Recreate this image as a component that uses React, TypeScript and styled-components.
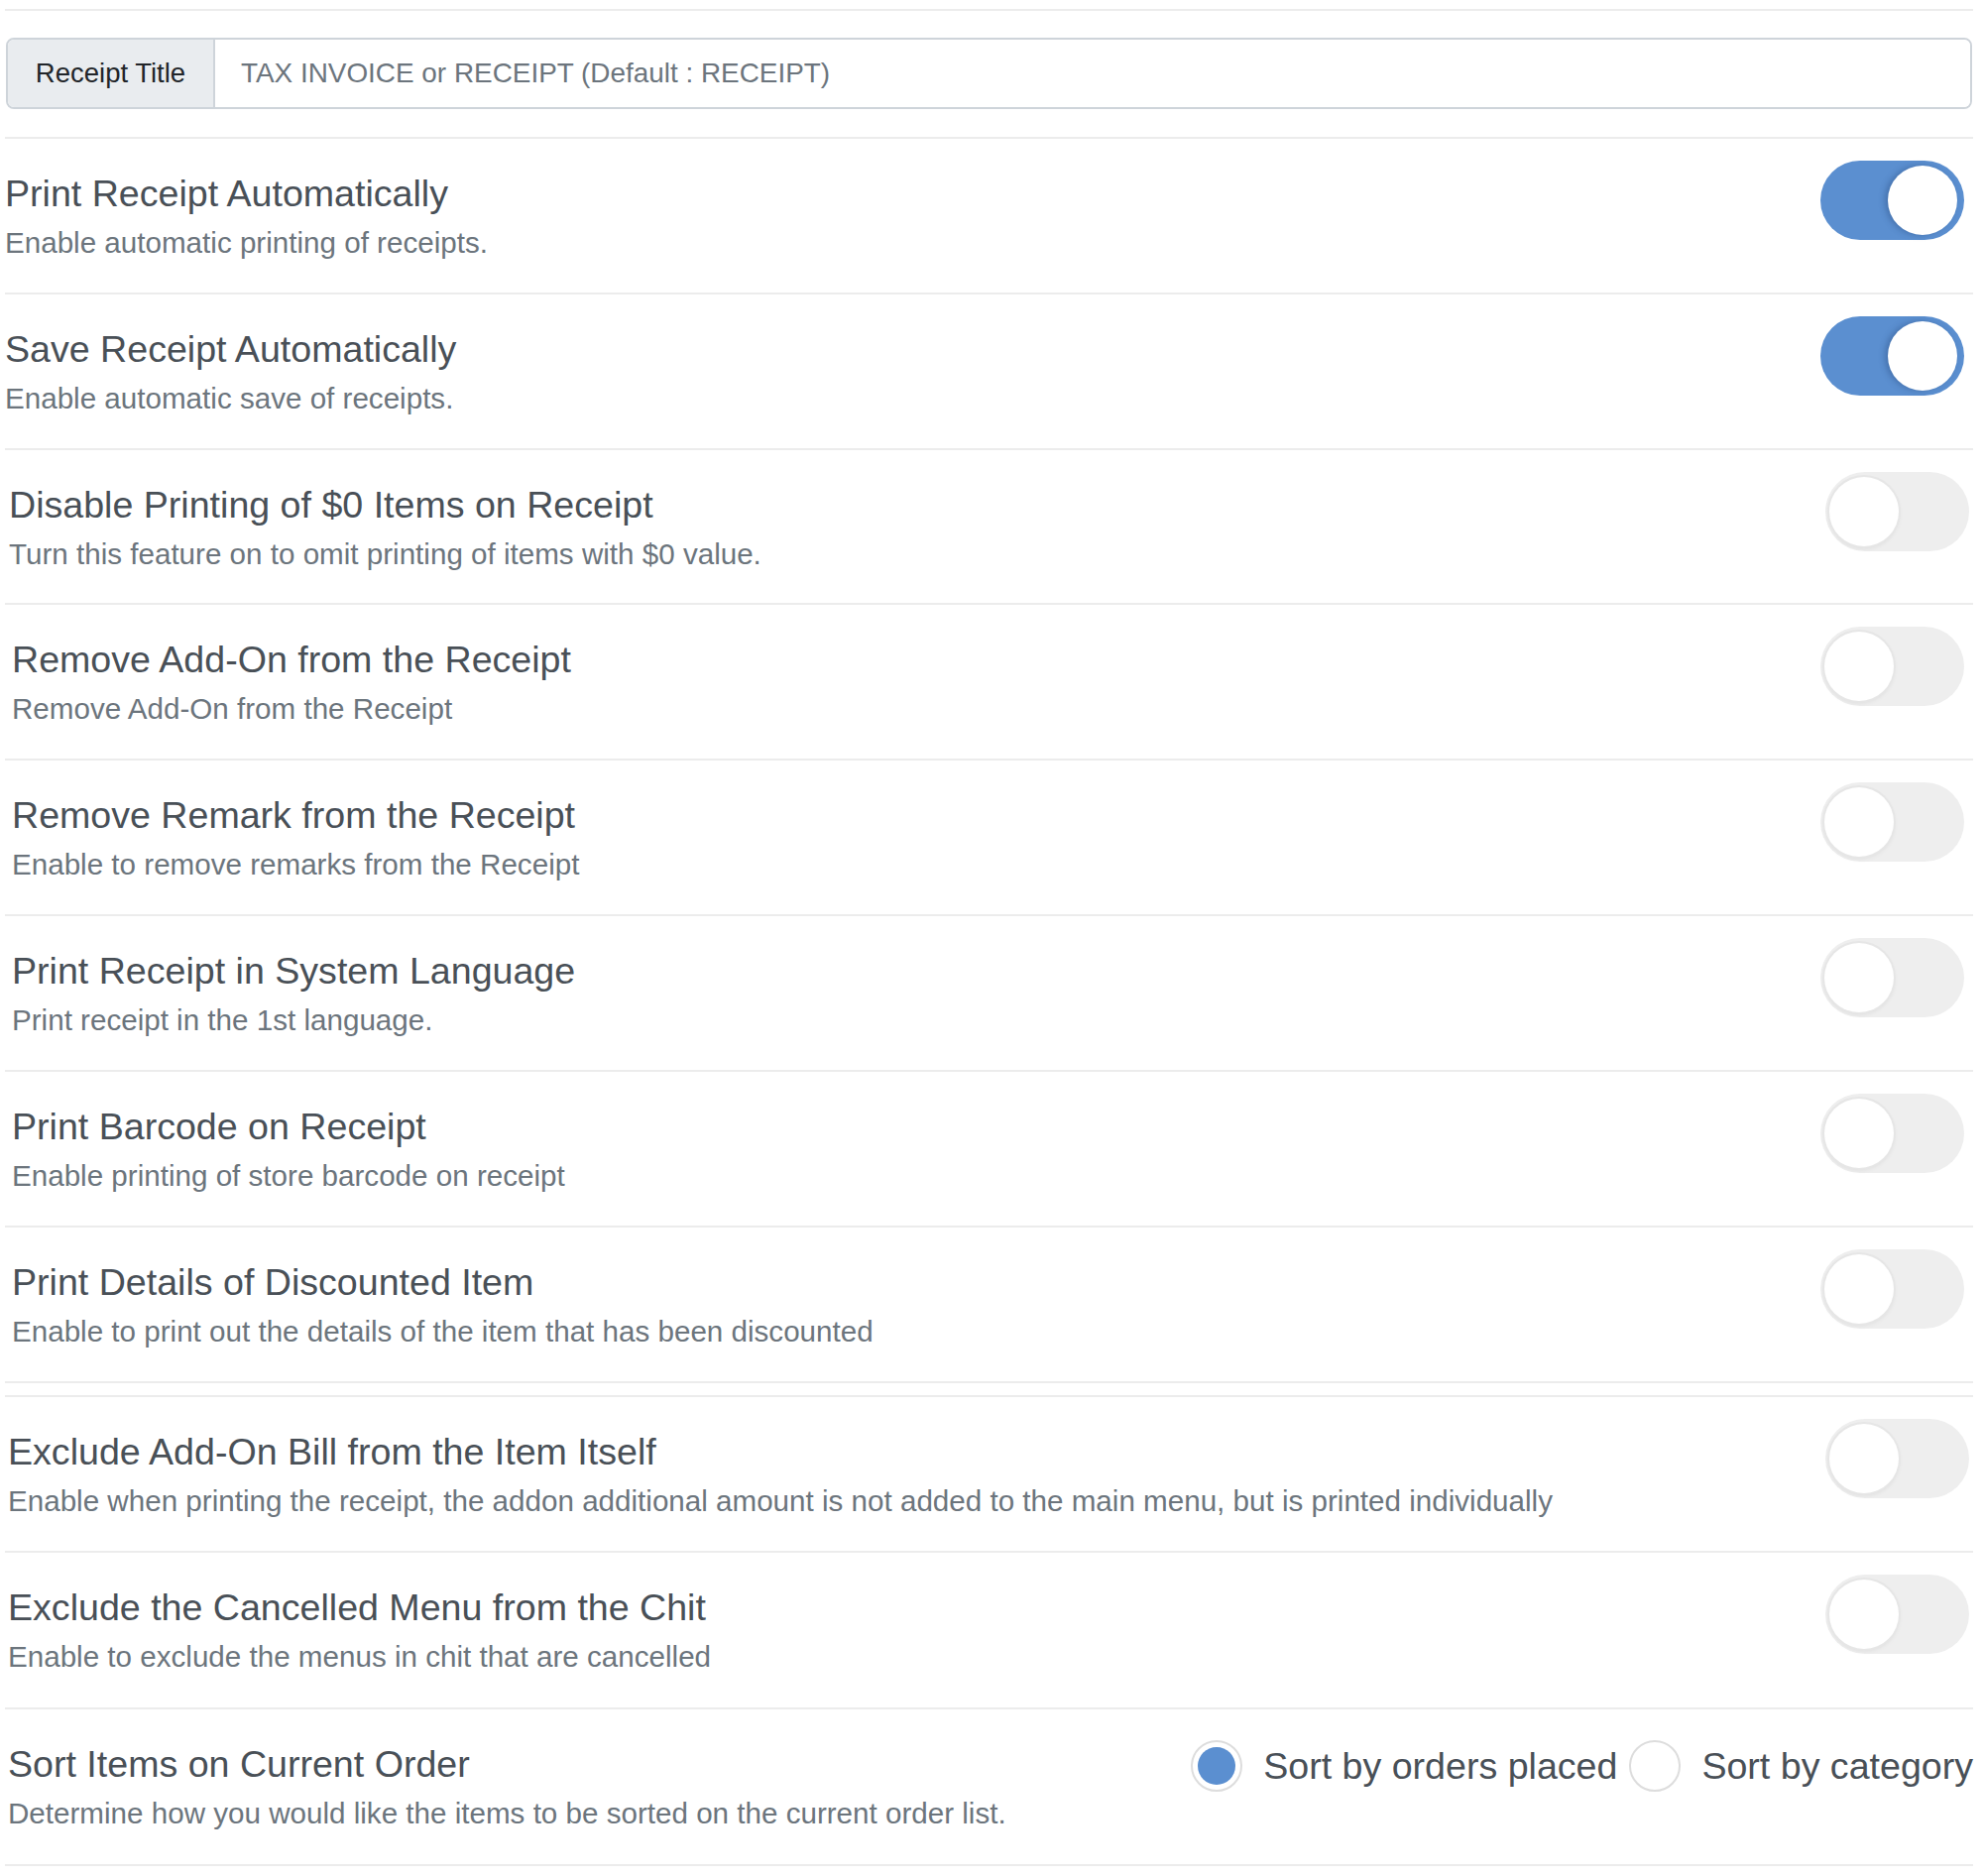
import React from "react";
import styled, { createGlobalStyle, css } from "styled-components";

const GlobalStyle = createGlobalStyle`
  html, body {
    margin: 0;
    padding: 0;
    background: #ffffff;
  }
  body {
    font-family: "Liberation Sans", Arial, sans-serif;
  }
  * { box-sizing: border-box; }
`;

const Page = styled.div`
  width: 2000px;
  padding: 9px 10px 0 5px;
`;

const Rule = styled.div`
  height: 2px;
  background: #ececec;
`;

const InputSection = styled.div`
  padding: 27px 1px 28px 1px;
`;

const InputGroup = styled.div`
  display: flex;
  height: 72px;
  border: 2px solid #ced4da;
  border-radius: 8px;
  overflow: hidden;
`;

const Addon = styled.label`
  flex: 0 0 209px;
  display: flex;
  align-items: center;
  justify-content: center;
  background: #e9ecef;
  border-right: 2px solid #ced4da;
  color: #212529;
  font-size: 27.5px;
`;

const TextInput = styled.input`
  flex: 1;
  border: none;
  outline: none;
  padding: 0 0 0 26px;
  font-family: "Liberation Sans", Arial, sans-serif;
  font-size: 27.9px;
  color: #495057;
  background: #fff;
  &::placeholder {
    color: #6c757d;
    opacity: 1;
  }
`;

const List = styled.div`
  border-bottom: 2px solid #ececec;
`;

const Row = styled.div<{ $indent: number; $tail: number; $bottom?: number }>`
  display: flex;
  justify-content: space-between;
  align-items: flex-start;
  border-top: 2px solid #ececec;
  padding: 22px ${(p) => p.$tail}px ${(p) => p.$bottom ?? 28}px ${(p) => p.$indent}px;
`;

const Gap = styled.div`
  height: 14px;
  border-top: 2px solid #ececec;
`;

const TextBlock = styled.div`
  padding-top: 11px;
`;

const Title = styled.div`
  font-size: 37.6px;
  line-height: 44px;
  color: #495057;
`;

const Desc = styled.div`
  margin-top: 6px;
  font-size: 29.6px;
  line-height: 44px;
  color: #6c757d;
`;

const Track = styled.div<{ $on: boolean }>`
  position: relative;
  flex: 0 0 145px;
  width: 145px;
  height: 80px;
  border-radius: 40px;
  background: ${(p) => (p.$on ? "#5b8fd0" : "#eeeeee")};
`;

const Knob = styled.div<{ $on: boolean }>`
  position: absolute;
  top: 5px;
  width: 70px;
  height: 70px;
  border-radius: 50%;
  background: #ffffff;
  ${(p) =>
    p.$on
      ? css`
          left: 68px;
          box-shadow: -3px 0 6px rgba(30, 60, 110, 0.35);
        `
      : css`
          left: 4px;
          box-shadow: 0 0 0 2px #e6e6e6, 0 2px 5px rgba(0, 0, 0, 0.08);
        `}
`;

const RadioGroup = styled.div`
  display: flex;
  align-items: center;
  padding-top: 9px;
`;

const RadioOption = styled.label`
  display: flex;
  align-items: center;
  font-size: 37.6px;
  color: #495057;
  & + & {
    margin-left: 12px;
  }
`;

const RadioCircle = styled.span<{ $checked: boolean }>`
  position: relative;
  flex: 0 0 52px;
  width: 52px;
  height: 52px;
  border-radius: 50%;
  border: 2px solid #dddddd;
  background: #fff;
  margin-right: 21px;
  ${(p) =>
    p.$checked &&
    css`
      &::after {
        content: "";
        position: absolute;
        top: 5px;
        left: 5px;
        width: 38px;
        height: 38px;
        border-radius: 50%;
        background: #5b8fd0;
      }
    `}
`;

const Toggle = ({ on }: { on: boolean }) => (
  <Track $on={on} role="switch" aria-checked={on}>
    <Knob $on={on} />
  </Track>
);

type Setting = {
  title: string;
  desc: string;
  on: boolean;
  indent: number;
  tail: number;
  bottom?: number;
  gapBefore?: boolean;
};

const settings: Setting[] = [
  { title: "Print Receipt Automatically", desc: "Enable automatic printing of receipts.", on: true, indent: 0, tail: 9 },
  { title: "Save Receipt Automatically", desc: "Enable automatic save of receipts.", on: true, indent: 0, tail: 9 },
  { title: "Disable Printing of $0 Items on Receipt", desc: "Turn this feature on to omit printing of items with $0 value.", on: false, indent: 4, tail: 4, bottom: 27 },
  { title: "Remove Add-On from the Receipt", desc: "Remove Add-On from the Receipt", on: false, indent: 7, tail: 9 },
  { title: "Remove Remark from the Receipt", desc: "Enable to remove remarks from the Receipt", on: false, indent: 7, tail: 9 },
  { title: "Print Receipt in System Language", desc: "Print receipt in the 1st language.", on: false, indent: 7, tail: 9 },
  { title: "Print Barcode on Receipt", desc: "Enable printing of store barcode on receipt", on: false, indent: 7, tail: 9 },
  { title: "Print Details of Discounted Item", desc: "Enable to print out the details of the item that has been discounted", on: false, indent: 7, tail: 9 },
  { title: "Exclude Add-On Bill from the Item Itself", desc: "Enable when printing the receipt, the addon additional amount is not added to the main menu, but is printed individually", on: false, indent: 3, tail: 4, gapBefore: true },
  { title: "Exclude the Cancelled Menu from the Chit", desc: "Enable to exclude the menus in chit that are cancelled", on: false, indent: 3, tail: 4, bottom: 29 },
];

export default function App() {
  return (
    <>
      <GlobalStyle />
      <Page>
        <Rule />
        <InputSection>
          <InputGroup>
            <Addon>Receipt Title</Addon>
            <TextInput readOnly placeholder="TAX INVOICE or RECEIPT (Default : RECEIPT)" />
          </InputGroup>
        </InputSection>
        <List>
          {settings.map((s) => (
            <React.Fragment key={s.title}>
              {s.gapBefore && <Gap />}
              <Row $indent={s.indent} $tail={s.tail} $bottom={s.bottom}>
                <TextBlock>
                  <Title>{s.title}</Title>
                  <Desc>{s.desc}</Desc>
                </TextBlock>
                <Toggle on={s.on} />
              </Row>
            </React.Fragment>
          ))}
          <Row $indent={3} $tail={0} $bottom={29}>
            <TextBlock>
              <Title>Sort Items on Current Order</Title>
              <Desc>Determine how you would like the items to be sorted on the current order list.</Desc>
            </TextBlock>
            <RadioGroup>
              <RadioOption>
                <RadioCircle $checked />
                Sort by orders placed
              </RadioOption>
              <RadioOption>
                <RadioCircle $checked={false} />
                Sort by category
              </RadioOption>
            </RadioGroup>
          </Row>
        </List>
      </Page>
    </>
  );
}
